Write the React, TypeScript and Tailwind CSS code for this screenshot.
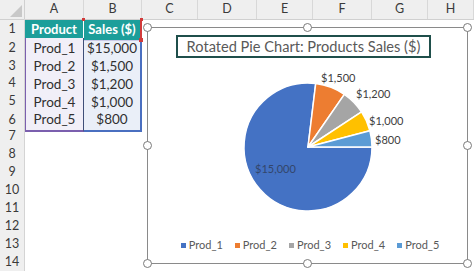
import React from 'react';

const COLS = ['A', 'B', 'C', 'D', 'E', 'F', 'G', 'H', ''];
const ROW_COUNT = 14;

const DATA = [
  { name: 'Prod_1', sales: '$15,000' },
  { name: 'Prod_2', sales: '$1,500' },
  { name: 'Prod_3', sales: '$1,200' },
  { name: 'Prod_4', sales: '$1,000' },
  { name: 'Prod_5', sales: '$800' },
];

const LEGEND = [
  { label: 'Prod_1', color: 'bg-[#4472c4]' },
  { label: 'Prod_2', color: 'bg-[#ed7d31]' },
  { label: 'Prod_3', color: 'bg-[#a5a5a5]' },
  { label: 'Prod_4', color: 'bg-[#ffc000]' },
  { label: 'Prod_5', color: 'bg-[#5b9bd5]' },
];

// handle positions relative to chart box
const HANDLES = [
  'left-[-5px] top-[-5px]',
  'left-[155px] top-[-5px]',
  'right-[-5px] top-[-5px]',
  'left-[-5px] top-[113px]',
  'right-[-5px] top-[113px]',
  'left-[-5px] bottom-[-5px]',
  'left-[155px] bottom-[-5px]',
  'right-[-5px] bottom-[-5px]',
];

function PieChart() {
  return (
    <svg width="318" height="176" viewBox="0 0 318 176" className="block">
      <g stroke="#ffffff" strokeWidth="1.5" strokeLinejoin="round">
        {/* Prod_1 - big slice, starts at 3 o'clock going round to just past 12 */}
        <path d="M160 89 L224 89 A64 64 0 1 1 167.71 25.47 Z" fill="#4472c4" />
        <path d="M160 89 L167.71 25.47 A64 64 0 0 1 196.36 36.33 Z" fill="#ed7d31" />
        <path d="M160 89 L196.36 36.33 A64 64 0 0 1 213.54 53.92 Z" fill="#a5a5a5" />
        <path d="M160 89 L213.54 53.92 A64 64 0 0 1 221.89 72.69 Z" fill="#ffc000" />
        <path d="M160 89 L221.89 72.69 A64 64 0 0 1 224 89 Z" fill="#5b9bd5" />
      </g>
      <g fontFamily="Lato, 'Liberation Sans', sans-serif" fontSize="11" fill="#404040" dominantBaseline="central">
        <text x="173" y="19">$1,500</text>
        <text x="208" y="35">$1,200</text>
        <text x="221" y="62">$1,000</text>
        <text x="227" y="81">$800</text>
        <text x="107" y="110" fill="#33466b">$15,000</text>
      </g>
    </svg>
  );
}

export default function App() {
  return (
    <div className="relative w-[474px] h-[271px] overflow-hidden bg-white font-['Lato','Liberation_Sans',sans-serif]">
      {/* Column headers */}
      <div className="grid grid-cols-[25px_59px_58px_56px_59px_56px_59px_56px_1fr] h-[20px] bg-[#efefef] border-b border-[#d0d0d0]">
        <div className="relative border-r border-[#d0d0d0]">
          <div className="absolute right-[2px] bottom-[2px] w-0 h-0 border-l-[12px] border-l-transparent border-b-[12px] border-b-[#c8c8c8]" />
        </div>
        {COLS.map((c, i) => (
          <div
            key={i}
            className="flex items-center justify-center text-[12.5px] text-[#3a3a3a] border-r border-[#d8d8d8]"
          >
            {c}
          </div>
        ))}
      </div>

      {/* Rows */}
      {Array.from({ length: ROW_COUNT }).map((_, r) => {
        const rowNum = r + 1;
        const item = rowNum >= 2 && rowNum <= 6 ? DATA[rowNum - 2] : null;
        return (
          <div key={r} className="grid grid-cols-[25px_59px_58px_56px_59px_56px_59px_56px_1fr] h-[17.9px]">
            <div className="flex items-center justify-center bg-[#efefef] border-r border-b border-[#d4d4d4] text-[12.5px] text-[#3a3a3a]">
              {rowNum}
            </div>
            {rowNum === 1 ? (
              <>
                <div className="flex items-center justify-center bg-[#1c9e9a] text-white font-bold text-[13px] border-r border-white border-b border-b-[#c9c9e6]">
                  Product
                </div>
                <div className="relative flex items-center justify-center bg-[#1c9e9a] text-white font-bold text-[13px] border-r-2 border-r-[#d23a3a] border-b border-b-[#c9c9e6]">
                  Sales ($)
                  <span className="absolute left-[-2px] top-[-2px] w-[3px] h-[3px] bg-[#d23a3a]" />
                  <span className="absolute right-[-3px] top-[-2px] w-[3px] h-[3px] bg-[#d23a3a]" />
                  <span className="absolute right-[-3px] bottom-[-2px] w-[4px] h-[4px] bg-[#d23a3a]" />
                </div>
              </>
            ) : item ? (
              <>
                <div
                  className={`flex items-center justify-center bg-[#f1eff8] text-[13.5px] text-[#303030] border-l border-l-[#7b5fae] border-r border-r-[#3f4f78] ${
                    rowNum === 6 ? 'border-b-2 border-b-[#7b5fae]' : 'border-b border-b-[#3f4f78]'
                  }`}
                >
                  {item.name}
                </div>
                <div
                  className={`flex items-center justify-center bg-[#eaeff8] text-[13.5px] text-[#303030] border-r-2 border-r-[#4a6fc0] ${
                    rowNum === 6 ? 'border-b-2 border-b-[#4a6fc0]' : 'border-b border-b-[#3f4f78]'
                  }`}
                >
                  {item.sales}
                </div>
              </>
            ) : (
              <>
                <div />
                <div />
              </>
            )}
            <div />
            <div />
            <div />
            <div />
            <div />
            <div />
            <div />
          </div>
        );
      })}

      {/* Chart object floating over the sheet */}
      <div className="absolute left-[147px] top-[27px] w-[321px] h-[237px] border-[1.5px] border-[#8a8a8a] bg-white">
        <div className="flex flex-col">
          <div className="ml-[28px] mt-[7px] w-[255px] h-[23px] border-2 border-[#1f4f4b] flex items-center justify-center text-[14.6px] text-[#595959]">
            Rotated Pie Chart: Products Sales ($)
          </div>
          <PieChart />
          <div className="flex justify-center items-center gap-[12px] h-[22px] pl-[5px] text-[11px] text-[#595959]">
            {LEGEND.map((l) => (
              <div key={l.label} className="flex items-center gap-[3px]">
                <span className={`w-[5px] h-[5px] ${l.color}`} />
                <span>{l.label}</span>
              </div>
            ))}
          </div>
        </div>
        {HANDLES.map((h, i) => (
          <span
            key={i}
            className={`absolute ${h} w-[9px] h-[9px] rounded-full bg-white border-[1.5px] border-[#7a7a7a]`}
          />
        ))}
      </div>
    </div>
  );
}
